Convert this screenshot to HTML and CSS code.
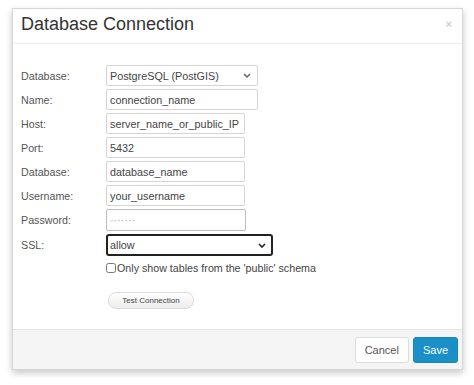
FILE: index.html
```html
<!DOCTYPE html>
<html lang="en">
<head>
    <meta charset="UTF-8">
    <meta name="viewport" content="width=device-width, initial-scale=1.0">
    <title>Database Connection</title>
    <link rel="stylesheet" href="styles.css">
</head>
<body>
    <div class="modal">
        <div class="modal-header">
            <h3>Database Connection</h3>
            <span class="close">&times;</span>
        </div>
        <div class="modal-body">
            <div class="form">
                <label>Database:</label>
                <div class="select-wrap">
                    <select class="field wide">
                        <option>PostgreSQL (PostGIS)</option>
                    </select>
                    <svg class="chevron" width="8" height="5" viewBox="0 0 8 5"><path d="M1 1l3 3 3-3" fill="none" stroke="#666" stroke-width="1.5"/></svg>
                </div>
                <label>Name:</label>
                <input class="field wide" type="text" value="connection_name">
                <label>Host:</label>
                <input class="field" type="text" value="server_name_or_public_IP">
                <label>Port:</label>
                <input class="field" type="text" value="5432">
                <label>Database:</label>
                <input class="field" type="text" value="database_name">
                <label>Username:</label>
                <input class="field" type="text" value="your_username">
                <label>Password:</label>
                <input class="field password" type="password" placeholder="·······">
                <label>SSL:</label>
                <div class="select-wrap">
                    <select class="field ssl">
                        <option>allow</option>
                    </select>
                    <svg class="chevron" width="8" height="5" viewBox="0 0 8 5"><path d="M1 1l3 3 3-3" fill="none" stroke="#222" stroke-width="1.6"/></svg>
                </div>
                <label class="check"><input type="checkbox">Only show tables from the 'public' schema</label>
                <button class="test">Test Connection</button>
            </div>
        </div>
        <div class="modal-footer">
            <button class="btn">Cancel</button>
            <button class="btn primary">Save</button>
        </div>
    </div>
</body>
</html>
```

FILE: styles.css
```css
body {
    font-family: "Liberation Sans", Arial, sans-serif;
    margin: 0;
    padding: 8px 12px;
    background-color: #fff;
    color: #333;
}
.modal {
    width: 449px;
    border: 1px solid #d6d6d6;
    box-shadow: 0 3px 7px rgba(0, 0, 0, 0.22);
    background-color: #fff;
}
.modal-header {
    display: flex;
    justify-content: space-between;
    padding: 5px 10px 8px 8px;
    border-bottom: 1px solid #eee;
}
.modal-header h3 {
    margin: 0;
    font-size: 18px;
    font-weight: normal;
    line-height: 21px;
    color: #333;
}
.close {
    color: #d0d0d0;
    font-size: 11px;
    font-weight: bold;
    line-height: 11px;
    margin-top: 5px;
}
.modal-body {
    padding: 21px 8px 20px 8px;
}
.form {
    display: grid;
    grid-template-columns: 85px auto;
    row-gap: 3px;
    align-items: center;
    justify-items: start;
}
.form label {
    font-size: 10.7px;
    color: #555;
}
.field {
    box-sizing: border-box;
    width: 139px;
    height: 21px;
    margin: 0;
    padding: 0 3px;
    border: 1px solid #d4d4d4;
    border-radius: 2px;
    font-family: "Liberation Sans", Arial, sans-serif;
    font-size: 10.8px;
    color: #444;
    background-color: #fff;
}
select.field {
    appearance: none;
    padding: 0 3px;
}
.select-wrap {
    display: flex;
    align-items: center;
}
.chevron {
    margin-left: -15px;
    pointer-events: none;
}
.field.wide {
    width: 152px;
}
.password {
    width: 140px;
    height: 22px;
    border-color: #bbb;
}
.password::placeholder {
    color: #aaa;
}
.ssl {
    width: 167px;
    height: 22px;
    border: 2px solid #222;
    border-radius: 3px;
}
select.ssl {
    padding: 0 2px;
}
.form .check {
    grid-column: 2;
    display: flex;
    align-items: center;
    height: 12px;
    margin-top: 3px;
    color: #444;
}
.check input {
    width: 10px;
    height: 10px;
    margin: 0 1px 0 0;
}
.test {
    grid-column: 2;
    margin: 15px 0 0 2px;
    width: 86px;
    height: 17px;
    padding: 0;
    border: 1px solid #ddd;
    border-radius: 8px;
    background: linear-gradient(#fff, #ececec);
    font-family: "Liberation Sans", Arial, sans-serif;
    font-size: 8px;
    color: #444;
}
.modal-footer {
    display: flex;
    justify-content: flex-end;
    gap: 4px;
    padding: 7px 4px 6px;
    background-color: #f5f5f5;
    border-top: 1px solid #e5e5e5;
}
.btn {
    height: 26px;
    padding: 0 9px;
    border: 1px solid #ddd;
    border-radius: 3px;
    background-color: #fff;
    font-family: "Liberation Sans", Arial, sans-serif;
    font-size: 11px;
    color: #555;
}
.btn.primary {
    padding: 0 9px;
    background-color: #1a90c6;
    border-color: #1785b8;
    color: #fff;
}
```
